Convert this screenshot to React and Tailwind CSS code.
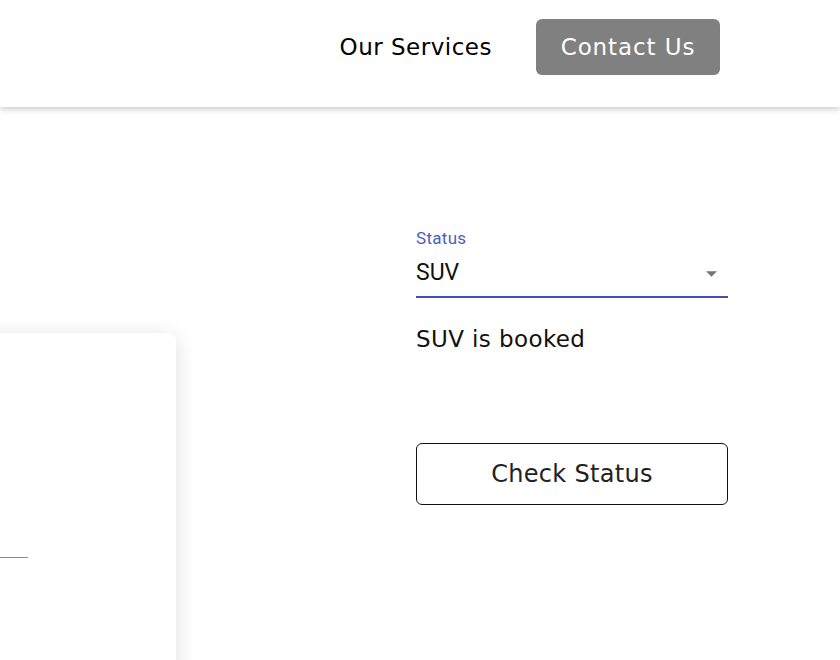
export default function App() {
  return (
    <div className="h-[660px] bg-white overflow-hidden font-['DejaVu_Sans',sans-serif]">
      <header className="relative z-10 h-[107px] bg-white shadow-[0_2px_6px_rgba(0,0,0,0.22)] flex items-start justify-end pr-[120px] pt-[19px]">
        <nav className="flex items-center h-[56px]">
          <a className="text-[23px] tracking-[0.5px] text-black mr-[44px] leading-none">Our Services</a>
          <button className="w-[184px] h-[56px] bg-[#808080] rounded-md text-white text-[23px] tracking-[0.9px] leading-none">
            Contact Us
          </button>
        </nav>
      </header>

      <main className="flex items-start">
        <div className="shrink-0 ml-[-200px] w-[376px] h-[360px] mt-[226px] bg-white rounded-lg shadow-[0_4px_22px_rgba(0,0,0,0.13)]">
          <div className="mt-[224px] h-px w-[228px] bg-[#8c8c8c]" />
        </div>

        <section className="shrink-0 ml-[240px] w-[312px] mt-[123px] flex flex-col">
          <label className="font-['Roboto',sans-serif] text-[17px] leading-[16px] tracking-[0.3px] text-[#4f5db7]">Status</label>
          <div className="mt-[16px] flex items-center justify-between pb-[12px] border-b-2 border-[#3f51b5]">
            <span className="font-['Roboto',sans-serif] text-[23px] leading-[22px] text-[#111]">SUV</span>
            <svg width="11" height="6" viewBox="0 0 10 5" className="mr-[11px] mt-[2px]">
              <path d="M0 0 L5 5 L10 0 Z" fill="#757575" />
            </svg>
          </div>
          <p className="mt-[27px] text-[23px] leading-[28px] tracking-[0.4px] text-[#111]">SUV is booked</p>
          <button className="mt-[90px] h-[62px] w-full border border-[#111] rounded-md bg-white text-[24px] tracking-[0.3px] text-[#222]">
            Check Status
          </button>
        </section>
      </main>
    </div>
  );
}
